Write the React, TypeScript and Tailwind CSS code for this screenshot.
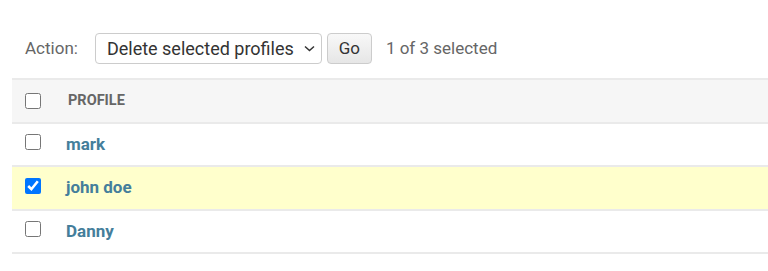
import { useState } from 'react';

type Profile = { id: number; name: string };

const profiles: Profile[] = [
  { id: 1, name: 'mark' },
  { id: 2, name: 'john doe' },
  { id: 3, name: 'Danny' },
];

const App = () => {
  const [selected, setSelected] = useState<number[]>([2]);

  const toggle = (id: number) => {
    setSelected((s) => (s.includes(id) ? s.filter((x) => x !== id) : [...s, id]));
  };

  return (
    <div className="min-h-screen bg-white font-['Roboto',_'Liberation_Sans',_sans-serif] pl-3">
      {/* Actions */}
      <div className="flex items-center h-[78px] pt-[19px]">
        <label className="text-[17px] text-[#666] ml-[13px] mr-[17px]">Action:</label>
        <div className="relative">
          <select
            defaultValue="delete"
            className="appearance-none h-[31px] w-[227px] border border-[#ccc] rounded-[4px] bg-white pl-[11px] pr-6 text-[18px] text-[#333]"
          >
            <option value="">---------</option>
            <option value="delete">Delete selected profiles</option>
          </select>
          <svg
            className="absolute right-[7px] top-[12px] pointer-events-none"
            width="11"
            height="7"
            viewBox="0 0 11 7"
            fill="none"
          >
            <path d="M1 1.5l4.5 4 4.5-4" stroke="#333" strokeWidth="1.5" />
          </svg>
        </div>
        <button className="ml-[5px] h-[31px] w-[45px] border border-[#ccc] rounded-[4px] bg-gradient-to-b from-[#f8f8f8] to-[#e6e6e6] text-[17px] text-[#333]">
          Go
        </button>
        <span className="ml-[14px] text-[17px] text-[#666]">
          {selected.length} of {profiles.length} selected
        </span>
      </div>

      {/* Results */}
      <table className="w-full border-collapse">
        <thead>
          <tr className="bg-[#f6f6f6] border-t-2 border-b-2 border-[#eaeaea] h-[43.5px]">
            <th className="w-[56px] pl-[13px] text-left align-middle">
              <input
                type="checkbox"
                checked={selected.length === profiles.length}
                onChange={() =>
                  setSelected(selected.length === profiles.length ? [] : profiles.map((p) => p.id))
                }
                className="w-[16px] h-[16px] m-0 block"
              />
            </th>
            <th className="text-left text-[14.5px] font-bold text-[#666] uppercase pt-[1px]">
              Profile
            </th>
          </tr>
        </thead>
        <tbody>
          {profiles.map((p) => {
            const isSel = selected.includes(p.id);
            return (
              <tr
                key={p.id}
                className={`h-[43.5px] border-b-2 border-[#eaeaea] ${isSel ? 'bg-[#ffc]' : 'bg-white'}`}
              >
                <td className="pl-[13px] align-middle">
                  <input
                    type="checkbox"
                    checked={isSel}
                    onChange={() => toggle(p.id)}
                    className="w-[16px] h-[16px] m-0 block -mt-[4px]"
                  />
                </td>
                <td className="align-middle -translate-x-[2px]">
                  <a href="#" className="text-[17px] font-bold text-[#447e9b] no-underline">
                    {p.name}
                  </a>
                </td>
              </tr>
            );
          })}
        </tbody>
      </table>
    </div>
  );
};

export default App;
